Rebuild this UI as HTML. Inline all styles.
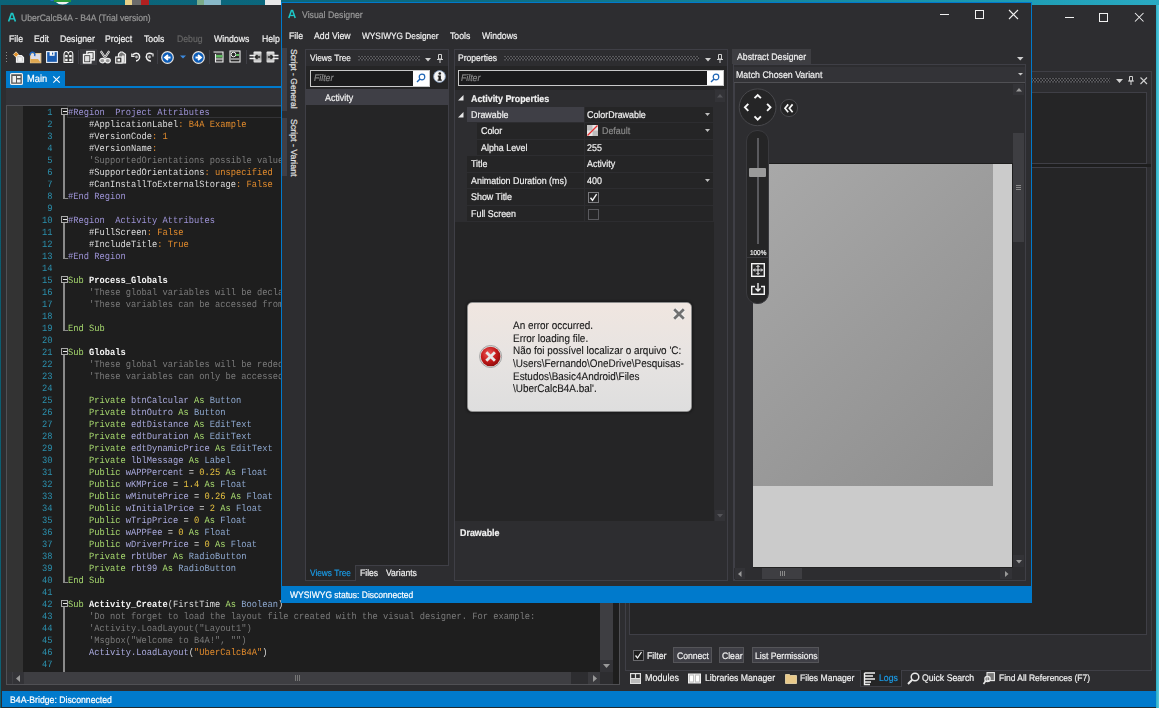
<!DOCTYPE html>
<html><head><meta charset="utf-8">
<style>
*{box-sizing:border-box;margin:0;padding:0}
html,body{width:1159px;height:708px;overflow:hidden;background:#2d2d30;font-family:"Liberation Sans",sans-serif;position:relative;text-rendering:geometricPrecision}
.a{position:absolute}
.t{position:absolute;white-space:pre;line-height:1;color:#f1f1f1;-webkit-text-stroke:0.2px currentColor}
svg{position:absolute;overflow:visible}
</style></head><body>
<div class="a" style="left:0px;top:0px;width:1159px;height:708px;background:linear-gradient(100deg,#0b5a6e 0%,#147a8c 40%,#1a90a8 70%,#22a5bd 100%);"></div><div class="a" style="left:0px;top:0px;width:1159px;height:5px;background:linear-gradient(90deg,#0b6378,#0c6a80 40%,#127f96 60%,#1b9ab2 85%,#2aaac2);"></div><svg style="left:46px;top:-6px" width="33" height="11"><circle cx="16.5" cy="0" r="10.5" fill="#f0f0f0"/><path d="M9 0H24V3H9Z" fill="#e87a2a"/><path d="M8 4H25V8H8Z" fill="#2a9a3a"/><path d="M6 -3V7" stroke="#2a70c8" stroke-width="3"/></svg><div class="a" style="left:125px;top:0px;width:7px;height:5px;background:#e8d088;"></div><div class="a" style="left:132px;top:0px;width:9px;height:5px;background:#6a6a6a;"></div><div class="a" style="left:141px;top:0px;width:8px;height:5px;background:#b02020;"></div><div class="a" style="left:197px;top:0px;width:7px;height:5px;background:#7aaa88;"></div><div class="a" style="left:204px;top:0px;width:17px;height:5px;background:#88b8c8;"></div><div class="a" style="left:265px;top:0px;width:16px;height:5px;background:#e8e8e8;"></div><div class="a" style="left:1156px;top:5px;width:3px;height:703px;background:linear-gradient(90deg,#2ab0c8,#58c8dc);"></div><div class="a" style="left:1px;top:5px;width:1155px;height:703px;background:#2d2d30;"></div><svg style="left:8px;top:13px" width="8" height="9" viewBox="0 0 8 9"><path d="M0.6 8.6 L3.4 0.6 L4.6 0.6 L7.4 8.6" stroke="#1ec8c8" stroke-width="1.6" fill="none"/><path d="M2 5.8 H6" stroke="#1ec8c8" stroke-width="1.4"/></svg><div class="t" style="left:21px;top:14.30px;font-size:9.46px;color:#999999;font-weight:normal;font-family:'Liberation Sans',sans-serif;transform:scaleX(0.9091);transform-origin:0 0;">UberCalcB4A - B4A (Trial version)</div><div class="a" style="left:1065px;top:17px;width:9px;height:1px;background:#f1f1f1;"></div><div class="a" style="left:1099px;top:13px;width:9px;height:9px;background:transparent;border:1px solid #f1f1f1"></div><svg style="left:1135px;top:13px" width="8.5" height="8.5"><path d="M0 0L8.5 8.5M8.5 0L0 8.5" stroke="#f1f1f1" stroke-width="1.05"/></svg><div class="t" style="left:8.6px;top:35.40px;font-size:9.57px;color:#f1f1f1;font-weight:normal;font-family:'Liberation Sans',sans-serif;transform:scaleX(0.9091);transform-origin:0 0;">File</div><div class="t" style="left:33.5px;top:35.40px;font-size:9.57px;color:#f1f1f1;font-weight:normal;font-family:'Liberation Sans',sans-serif;transform:scaleX(0.9091);transform-origin:0 0;">Edit</div><div class="t" style="left:59.5px;top:35.40px;font-size:9.57px;color:#f1f1f1;font-weight:normal;font-family:'Liberation Sans',sans-serif;transform:scaleX(0.9091);transform-origin:0 0;">Designer</div><div class="t" style="left:105.2px;top:35.40px;font-size:9.57px;color:#f1f1f1;font-weight:normal;font-family:'Liberation Sans',sans-serif;transform:scaleX(0.9091);transform-origin:0 0;">Project</div><div class="t" style="left:144px;top:35.40px;font-size:9.57px;color:#f1f1f1;font-weight:normal;font-family:'Liberation Sans',sans-serif;transform:scaleX(0.9091);transform-origin:0 0;">Tools</div><div class="t" style="left:176.5px;top:35.40px;font-size:9.57px;color:#656565;font-weight:normal;font-family:'Liberation Sans',sans-serif;transform:scaleX(0.9091);transform-origin:0 0;">Debug</div><div class="t" style="left:214px;top:35.40px;font-size:9.57px;color:#f1f1f1;font-weight:normal;font-family:'Liberation Sans',sans-serif;transform:scaleX(0.9091);transform-origin:0 0;">Windows</div><div class="t" style="left:262px;top:35.40px;font-size:9.57px;color:#f1f1f1;font-weight:normal;font-family:'Liberation Sans',sans-serif;transform:scaleX(0.9091);transform-origin:0 0;">Help</div><div class="a" style="left:6px;top:52px;width:1px;height:1px;background:#8a8a8a;"></div><div class="a" style="left:6px;top:55px;width:1px;height:1px;background:#8a8a8a;"></div><div class="a" style="left:6px;top:58px;width:1px;height:1px;background:#8a8a8a;"></div><div class="a" style="left:6px;top:61px;width:1px;height:1px;background:#8a8a8a;"></div><svg style="left:12px;top:50px" width="14" height="14" viewBox="0 0 14 14"><path d="M5 5.5H9.5L11.5 7.5V12.2H4.5V6" fill="#cfcfcf" stroke="#f4f4f4" stroke-width="1.2"/><rect x="6.2" y="7.3" width="3.6" height="4" fill="#f4f4f4"/><path d="M4 1.8 L6.6 4.5 L4 7.2 L1.4 4.5Z" fill="#e0902a" stroke="#f4e2c8" stroke-width="0.8"/></svg><svg style="left:29px;top:51px" width="13" height="13" viewBox="0 0 13 13"><path d="M1.5 2.5H11.8V11.8H1.5Z" fill="#dcdce8" stroke="#e8c890" stroke-width="1.1"/><path d="M1.5 8H9L11.8 11.8H1.5Z" fill="#e0a850"/><path d="M1.2 4.5A2.4 2.4 0 1 1 5.5 5" fill="none" stroke="#1f64c0" stroke-width="1.5"/></svg><svg style="left:45.5px;top:51px" width="12" height="12" viewBox="0 0 12 12"><rect x="0.6" y="0.6" width="10.8" height="10.8" fill="#1a5cb0" stroke="#eef2f8" stroke-width="1.1"/><rect x="3.6" y="1" width="5" height="3.8" fill="#f8f8f8"/><rect x="6" y="1.6" width="1.2" height="2" fill="#1a5cb0"/></svg><svg style="left:63px;top:50px" width="11" height="14" viewBox="0 0 11 14"><path d="M1 12.5V4 Q1.5 1.2 3.5 1.5 Q5 2 5.3 3.2 Q5.8 2 7.2 1.5 Q9.5 1.2 9.8 4V12.5Z" fill="#3a3a3a" stroke="#f4f4f4" stroke-width="1.1"/><rect x="2.2" y="5" width="2.4" height="2.2" fill="#f4f4f4"/><rect x="6.2" y="5" width="2.4" height="2.2" fill="#f4f4f4"/><rect x="2.2" y="8.8" width="2.4" height="2.4" fill="#f4f4f4"/><rect x="6.2" y="8.8" width="2.4" height="2.4" fill="#f4f4f4"/></svg><div class="a" style="left:78px;top:50px;width:1px;height:14px;background:#3f3f46;"></div><div class="a" style="left:80px;top:49px;width:17px;height:16px;background:#3a3a3e;"></div><svg style="left:82px;top:50px" width="14" height="14" viewBox="0 0 14 14"><rect x="4.8" y="1.5" width="7.5" height="8.5" fill="#e0e0e0" stroke="#f4f4f4" stroke-width="1.3"/><rect x="6" y="2.7" width="5.1" height="6.1" fill="none" stroke="#222" stroke-width="0.7"/><rect x="1.5" y="4.5" width="7.5" height="8.5" fill="#e8e8e8" stroke="#f4f4f4" stroke-width="1.3"/><rect x="2.7" y="5.7" width="5.1" height="6.1" fill="#e0e0e0" stroke="#222" stroke-width="0.7"/></svg><svg style="left:99px;top:50px" width="12" height="14" viewBox="0 0 12 14"><path d="M1.8 1.2 L6 7.5 L10.2 1.2" stroke="#f0f0f0" stroke-width="2.2" fill="none"/><path d="M1.8 1.2 L6 7.5 L10.2 1.2" stroke="#555" stroke-width="0.8" fill="none"/><ellipse cx="3.3" cy="10.6" rx="2.6" ry="2.2" fill="#999" stroke="#f0f0f0" stroke-width="1.2"/><ellipse cx="8.7" cy="10.6" rx="2.6" ry="2.2" fill="#999" stroke="#f0f0f0" stroke-width="1.2"/></svg><svg style="left:115px;top:51px" width="12" height="13" viewBox="0 0 12 13"><path d="M3.5 11.8V3 L5.5 1 H7.5 L10.5 3.3 V11.8Z" fill="#777" stroke="#f0f0f0" stroke-width="1.2"/><rect x="7" y="4.5" width="2.5" height="7" fill="#e0e0e0"/><rect x="0.7" y="6" width="6.3" height="6" fill="#333" stroke="#f0f0f0" stroke-width="1.2"/><rect x="2.5" y="7.8" width="2.6" height="2.6" fill="#f0f0f0"/></svg><svg style="left:131px;top:52px" width="10" height="10" viewBox="0 0 10 10"><path d="M1.5 3 Q4 0.5 7 1.6 Q9.3 3.5 8.3 6.5 Q7 9 5 9" stroke="#f0f0f0" stroke-width="1.4" fill="none"/><path d="M0.8 1.5V4.3H3.6" stroke="#f0f0f0" stroke-width="1.2" fill="none"/><circle cx="5.5" cy="5" r="1.4" fill="#bbb"/></svg><svg style="left:145px;top:52px" width="9" height="10" viewBox="0 0 9 10"><path d="M7.5 2 Q4.5 0.5 2 2 Q0.5 4.5 2 7 Q3.5 9.2 6 9" stroke="#f0f0f0" stroke-width="1.4" fill="none"/><path d="M8 1.5V4.5" stroke="#f0f0f0" stroke-width="1.2"/><circle cx="4.5" cy="5" r="1.4" fill="#bbb"/></svg><div class="a" style="left:157px;top:50px;width:1px;height:14px;background:#3f3f46;"></div><svg style="left:161px;top:51px" width="13" height="13" viewBox="0 0 13 13"><circle cx="6.5" cy="6.5" r="5.8" fill="#0b5cb8" stroke="#e8e4e0" stroke-width="1.2"/><path d="M9.5 6.5 H4.5 M7 4 L4 6.5 L7 9" stroke="#fff" stroke-width="1.8" fill="none"/></svg><svg style="left:180px;top:55px" width="6" height="4" viewBox="0 0 6 4"><path d="M0 0.5 H6 L3 3.5Z" fill="#3d8be0"/></svg><svg style="left:192px;top:51px" width="13" height="13" viewBox="0 0 13 13"><circle cx="6.5" cy="6.5" r="5.8" fill="#0b5cb8" stroke="#e8e4e0" stroke-width="1.2"/><path d="M3.5 6.5 H8.5 M6 4 L9 6.5 L6 9" stroke="#fff" stroke-width="1.8" fill="none"/></svg><div class="a" style="left:209px;top:50px;width:1px;height:14px;background:#3f3f46;"></div><svg style="left:213px;top:51px" width="12" height="12" viewBox="0 0 12 12"><path d="M0.5 1 H10 V11 H2.5 V3" fill="#444" stroke="#f0f0f0" stroke-width="1.1"/><rect x="3" y="4" width="6.5" height="2.5" fill="#5cb85c"/><path d="M3 8 H9.5" stroke="#f0f0f0" stroke-width="1"/></svg><svg style="left:229px;top:50px" width="12" height="13" viewBox="0 0 12 13"><rect x="1" y="1" width="10" height="11" fill="#2a2a2a" stroke="#f0f0f0" stroke-width="1.1"/><circle cx="4.5" cy="4.5" r="2.3" fill="none" stroke="#f0f0f0" stroke-width="1"/><rect x="7" y="4" width="3" height="2" fill="#5cb85c"/><path d="M2 9 H10" stroke="#f0f0f0" stroke-width="1"/></svg><div class="a" style="left:246px;top:50px;width:1px;height:14px;background:#3f3f46;"></div><svg style="left:249px;top:51px" width="14" height="12" viewBox="0 0 14 12"><defs><linearGradient id="sg" x1="0" y1="0" x2="0" y2="1"><stop offset="0" stop-color="#f4f4f4"/><stop offset="0.5" stop-color="#9a9a9a"/><stop offset="1" stop-color="#e8e8e8"/></linearGradient></defs><rect x="4.5" y="0.5" width="8" height="11" rx="1" fill="url(#sg)"/><path d="M0.5 4.5H6 M0.5 7.5H6" stroke="#f0f0f0" stroke-width="1.3"/><path d="M11 6H6.5 M8.5 4L6.5 6L8.5 8" stroke="#2a2a2a" stroke-width="1.5" fill="none"/></svg><svg style="left:265px;top:51px" width="14" height="12" viewBox="0 0 14 12"><rect x="1.5" y="0.5" width="8" height="11" rx="1" fill="url(#sg)"/><path d="M8 4.5H13.5 M8 7.5H13.5" stroke="#f0f0f0" stroke-width="1.3"/><path d="M3 6H7.5 M5.5 4L7.5 6L5.5 8" stroke="#2a2a2a" stroke-width="1.5" fill="none"/></svg><div class="a" style="left:6px;top:71px;width:59px;height:15px;background:#007acc;"></div><div class="a" style="left:6px;top:86px;width:610px;height:2px;background:#007acc;"></div><svg style="left:10px;top:73px" width="13" height="12" viewBox="0 0 13 12"><rect x="0.6" y="0.6" width="11.8" height="10.8" rx="1" fill="#555" stroke="#eee" stroke-width="1.2"/><rect x="2.5" y="3" width="3.5" height="6.5" fill="#eee"/><rect x="7" y="3" width="3.5" height="2" fill="#eee"/><rect x="7" y="6.5" width="3.5" height="3" fill="#eee"/></svg><div class="t" style="left:26.5px;top:75.40px;font-size:10.23px;color:#ffffff;font-weight:normal;font-family:'Liberation Sans',sans-serif;transform:scaleX(0.9091);transform-origin:0 0;">Main</div><svg style="left:53px;top:76px" width="7" height="7" viewBox="0 0 7 7"><path d="M0.3 0.3L6.7 6.7M6.7 0.3L0.3 6.7" stroke="#fff" stroke-width="1.1"/></svg><div class="a" style="left:6px;top:88px;width:614px;height:17px;background:#333337;"></div><div class="a" style="left:6px;top:105px;width:614px;height:580px;background:#1e1e1e;border:1px solid #505054"></div><div class="a" style="left:7px;top:106px;width:16px;height:566px;background:#333333;"></div><div class="a" style="left:67px;top:106px;width:214px;height:12px;background:transparent;border:1px solid #333336;border-right:none"></div><div class="a" style="left:23px;top:106px;width:577px;height:566px;overflow:hidden"><div class="t" style="left:0;width:29.5px;text-align:right;top:2.14px;font-family:'Liberation Mono';font-size:9.600px;color:#2b91af;-webkit-text-stroke:0;transform:scaleX(0.9118);transform-origin:100% 0">1</div><div class="t" style="left:45px;top:2.14px;font-family:'Liberation Mono';font-size:9.600px;-webkit-text-stroke:0;transform:scaleX(0.9118);transform-origin:0 0"><span style="color:#9d93d6">#Region  Project Attributes</span></div><div class="t" style="left:0;width:29.5px;text-align:right;top:14.14px;font-family:'Liberation Mono';font-size:9.600px;color:#2b91af;-webkit-text-stroke:0;transform:scaleX(0.9118);transform-origin:100% 0">2</div><div class="t" style="left:45px;top:14.14px;font-family:'Liberation Mono';font-size:9.600px;-webkit-text-stroke:0;transform:scaleX(0.9118);transform-origin:0 0"><span style="color:#dcdcdc">    #ApplicationLabel</span><span style="color:#e08a2c">: B4A Example</span></div><div class="t" style="left:0;width:29.5px;text-align:right;top:26.14px;font-family:'Liberation Mono';font-size:9.600px;color:#2b91af;-webkit-text-stroke:0;transform:scaleX(0.9118);transform-origin:100% 0">3</div><div class="t" style="left:45px;top:26.14px;font-family:'Liberation Mono';font-size:9.600px;-webkit-text-stroke:0;transform:scaleX(0.9118);transform-origin:0 0"><span style="color:#dcdcdc">    #VersionCode</span><span style="color:#e08a2c">: 1</span></div><div class="t" style="left:0;width:29.5px;text-align:right;top:38.14px;font-family:'Liberation Mono';font-size:9.600px;color:#2b91af;-webkit-text-stroke:0;transform:scaleX(0.9118);transform-origin:100% 0">4</div><div class="t" style="left:45px;top:38.14px;font-family:'Liberation Mono';font-size:9.600px;-webkit-text-stroke:0;transform:scaleX(0.9118);transform-origin:0 0"><span style="color:#dcdcdc">    #VersionName</span><span style="color:#e08a2c">:</span></div><div class="t" style="left:0;width:29.5px;text-align:right;top:50.14px;font-family:'Liberation Mono';font-size:9.600px;color:#2b91af;-webkit-text-stroke:0;transform:scaleX(0.9118);transform-origin:100% 0">5</div><div class="t" style="left:45px;top:50.14px;font-family:'Liberation Mono';font-size:9.600px;-webkit-text-stroke:0;transform:scaleX(0.9118);transform-origin:0 0"><span style="color:#7a7a7a">    &#x27;SupportedOrientations possible values: unspecified, landscape or portrait.</span></div><div class="t" style="left:0;width:29.5px;text-align:right;top:62.14px;font-family:'Liberation Mono';font-size:9.600px;color:#2b91af;-webkit-text-stroke:0;transform:scaleX(0.9118);transform-origin:100% 0">6</div><div class="t" style="left:45px;top:62.14px;font-family:'Liberation Mono';font-size:9.600px;-webkit-text-stroke:0;transform:scaleX(0.9118);transform-origin:0 0"><span style="color:#dcdcdc">    #SupportedOrientations</span><span style="color:#e08a2c">: unspecified</span></div><div class="t" style="left:0;width:29.5px;text-align:right;top:74.14px;font-family:'Liberation Mono';font-size:9.600px;color:#2b91af;-webkit-text-stroke:0;transform:scaleX(0.9118);transform-origin:100% 0">7</div><div class="t" style="left:45px;top:74.14px;font-family:'Liberation Mono';font-size:9.600px;-webkit-text-stroke:0;transform:scaleX(0.9118);transform-origin:0 0"><span style="color:#dcdcdc">    #CanInstallToExternalStorage</span><span style="color:#e08a2c">: False</span></div><div class="t" style="left:0;width:29.5px;text-align:right;top:86.14px;font-family:'Liberation Mono';font-size:9.600px;color:#2b91af;-webkit-text-stroke:0;transform:scaleX(0.9118);transform-origin:100% 0">8</div><div class="t" style="left:45px;top:86.14px;font-family:'Liberation Mono';font-size:9.600px;-webkit-text-stroke:0;transform:scaleX(0.9118);transform-origin:0 0"><span style="color:#9d93d6">#End Region</span></div><div class="t" style="left:0;width:29.5px;text-align:right;top:98.14px;font-family:'Liberation Mono';font-size:9.600px;color:#2b91af;-webkit-text-stroke:0;transform:scaleX(0.9118);transform-origin:100% 0">9</div><div class="t" style="left:0;width:29.5px;text-align:right;top:110.14px;font-family:'Liberation Mono';font-size:9.600px;color:#2b91af;-webkit-text-stroke:0;transform:scaleX(0.9118);transform-origin:100% 0">10</div><div class="t" style="left:45px;top:110.14px;font-family:'Liberation Mono';font-size:9.600px;-webkit-text-stroke:0;transform:scaleX(0.9118);transform-origin:0 0"><span style="color:#9d93d6">#Region  Activity Attributes</span></div><div class="t" style="left:0;width:29.5px;text-align:right;top:122.14px;font-family:'Liberation Mono';font-size:9.600px;color:#2b91af;-webkit-text-stroke:0;transform:scaleX(0.9118);transform-origin:100% 0">11</div><div class="t" style="left:45px;top:122.14px;font-family:'Liberation Mono';font-size:9.600px;-webkit-text-stroke:0;transform:scaleX(0.9118);transform-origin:0 0"><span style="color:#dcdcdc">    #FullScreen</span><span style="color:#e08a2c">: False</span></div><div class="t" style="left:0;width:29.5px;text-align:right;top:134.14px;font-family:'Liberation Mono';font-size:9.600px;color:#2b91af;-webkit-text-stroke:0;transform:scaleX(0.9118);transform-origin:100% 0">12</div><div class="t" style="left:45px;top:134.14px;font-family:'Liberation Mono';font-size:9.600px;-webkit-text-stroke:0;transform:scaleX(0.9118);transform-origin:0 0"><span style="color:#dcdcdc">    #IncludeTitle</span><span style="color:#e08a2c">: True</span></div><div class="t" style="left:0;width:29.5px;text-align:right;top:146.14px;font-family:'Liberation Mono';font-size:9.600px;color:#2b91af;-webkit-text-stroke:0;transform:scaleX(0.9118);transform-origin:100% 0">13</div><div class="t" style="left:45px;top:146.14px;font-family:'Liberation Mono';font-size:9.600px;-webkit-text-stroke:0;transform:scaleX(0.9118);transform-origin:0 0"><span style="color:#9d93d6">#End Region</span></div><div class="t" style="left:0;width:29.5px;text-align:right;top:158.14px;font-family:'Liberation Mono';font-size:9.600px;color:#2b91af;-webkit-text-stroke:0;transform:scaleX(0.9118);transform-origin:100% 0">14</div><div class="t" style="left:0;width:29.5px;text-align:right;top:170.14px;font-family:'Liberation Mono';font-size:9.600px;color:#2b91af;-webkit-text-stroke:0;transform:scaleX(0.9118);transform-origin:100% 0">15</div><div class="t" style="left:45px;top:170.14px;font-family:'Liberation Mono';font-size:9.600px;-webkit-text-stroke:0;transform:scaleX(0.9118);transform-origin:0 0"><span style="color:#a6d86e">Sub</span><span style="color:#f4f4f4;font-weight:bold"> Process_Globals</span></div><div class="t" style="left:0;width:29.5px;text-align:right;top:182.14px;font-family:'Liberation Mono';font-size:9.600px;color:#2b91af;-webkit-text-stroke:0;transform:scaleX(0.9118);transform-origin:100% 0">16</div><div class="t" style="left:45px;top:182.14px;font-family:'Liberation Mono';font-size:9.600px;-webkit-text-stroke:0;transform:scaleX(0.9118);transform-origin:0 0"><span style="color:#7a7a7a">    &#x27;These global variables will be declared once when the application starts.</span></div><div class="t" style="left:0;width:29.5px;text-align:right;top:194.14px;font-family:'Liberation Mono';font-size:9.600px;color:#2b91af;-webkit-text-stroke:0;transform:scaleX(0.9118);transform-origin:100% 0">17</div><div class="t" style="left:45px;top:194.14px;font-family:'Liberation Mono';font-size:9.600px;-webkit-text-stroke:0;transform:scaleX(0.9118);transform-origin:0 0"><span style="color:#7a7a7a">    &#x27;These variables can be accessed from all modules.</span></div><div class="t" style="left:0;width:29.5px;text-align:right;top:206.14px;font-family:'Liberation Mono';font-size:9.600px;color:#2b91af;-webkit-text-stroke:0;transform:scaleX(0.9118);transform-origin:100% 0">18</div><div class="t" style="left:0;width:29.5px;text-align:right;top:218.14px;font-family:'Liberation Mono';font-size:9.600px;color:#2b91af;-webkit-text-stroke:0;transform:scaleX(0.9118);transform-origin:100% 0">19</div><div class="t" style="left:45px;top:218.14px;font-family:'Liberation Mono';font-size:9.600px;-webkit-text-stroke:0;transform:scaleX(0.9118);transform-origin:0 0"><span style="color:#a6d86e">End Sub</span></div><div class="t" style="left:0;width:29.5px;text-align:right;top:230.14px;font-family:'Liberation Mono';font-size:9.600px;color:#2b91af;-webkit-text-stroke:0;transform:scaleX(0.9118);transform-origin:100% 0">20</div><div class="t" style="left:0;width:29.5px;text-align:right;top:242.14px;font-family:'Liberation Mono';font-size:9.600px;color:#2b91af;-webkit-text-stroke:0;transform:scaleX(0.9118);transform-origin:100% 0">21</div><div class="t" style="left:45px;top:242.14px;font-family:'Liberation Mono';font-size:9.600px;-webkit-text-stroke:0;transform:scaleX(0.9118);transform-origin:0 0"><span style="color:#a6d86e">Sub</span><span style="color:#f4f4f4;font-weight:bold"> Globals</span></div><div class="t" style="left:0;width:29.5px;text-align:right;top:254.14px;font-family:'Liberation Mono';font-size:9.600px;color:#2b91af;-webkit-text-stroke:0;transform:scaleX(0.9118);transform-origin:100% 0">22</div><div class="t" style="left:45px;top:254.14px;font-family:'Liberation Mono';font-size:9.600px;-webkit-text-stroke:0;transform:scaleX(0.9118);transform-origin:0 0"><span style="color:#7a7a7a">    &#x27;These global variables will be redeclared each time the activity is created.</span></div><div class="t" style="left:0;width:29.5px;text-align:right;top:266.14px;font-family:'Liberation Mono';font-size:9.600px;color:#2b91af;-webkit-text-stroke:0;transform:scaleX(0.9118);transform-origin:100% 0">23</div><div class="t" style="left:45px;top:266.14px;font-family:'Liberation Mono';font-size:9.600px;-webkit-text-stroke:0;transform:scaleX(0.9118);transform-origin:0 0"><span style="color:#7a7a7a">    &#x27;These variables can only be accessed from this module.</span></div><div class="t" style="left:0;width:29.5px;text-align:right;top:278.14px;font-family:'Liberation Mono';font-size:9.600px;color:#2b91af;-webkit-text-stroke:0;transform:scaleX(0.9118);transform-origin:100% 0">24</div><div class="t" style="left:0;width:29.5px;text-align:right;top:290.14px;font-family:'Liberation Mono';font-size:9.600px;color:#2b91af;-webkit-text-stroke:0;transform:scaleX(0.9118);transform-origin:100% 0">25</div><div class="t" style="left:45px;top:290.14px;font-family:'Liberation Mono';font-size:9.600px;-webkit-text-stroke:0;transform:scaleX(0.9118);transform-origin:0 0"><span style="color:#a6d86e">    Private</span><span style="color:#a9a9dc"> btnCalcular</span><span style="color:#a6d86e"> As </span><span style="color:#8ea8cf">Button</span></div><div class="t" style="left:0;width:29.5px;text-align:right;top:302.14px;font-family:'Liberation Mono';font-size:9.600px;color:#2b91af;-webkit-text-stroke:0;transform:scaleX(0.9118);transform-origin:100% 0">26</div><div class="t" style="left:45px;top:302.14px;font-family:'Liberation Mono';font-size:9.600px;-webkit-text-stroke:0;transform:scaleX(0.9118);transform-origin:0 0"><span style="color:#a6d86e">    Private</span><span style="color:#a9a9dc"> btnOutro</span><span style="color:#a6d86e"> As </span><span style="color:#8ea8cf">Button</span></div><div class="t" style="left:0;width:29.5px;text-align:right;top:314.14px;font-family:'Liberation Mono';font-size:9.600px;color:#2b91af;-webkit-text-stroke:0;transform:scaleX(0.9118);transform-origin:100% 0">27</div><div class="t" style="left:45px;top:314.14px;font-family:'Liberation Mono';font-size:9.600px;-webkit-text-stroke:0;transform:scaleX(0.9118);transform-origin:0 0"><span style="color:#a6d86e">    Private</span><span style="color:#a9a9dc"> edtDistance</span><span style="color:#a6d86e"> As </span><span style="color:#8ea8cf">EditText</span></div><div class="t" style="left:0;width:29.5px;text-align:right;top:326.14px;font-family:'Liberation Mono';font-size:9.600px;color:#2b91af;-webkit-text-stroke:0;transform:scaleX(0.9118);transform-origin:100% 0">28</div><div class="t" style="left:45px;top:326.14px;font-family:'Liberation Mono';font-size:9.600px;-webkit-text-stroke:0;transform:scaleX(0.9118);transform-origin:0 0"><span style="color:#a6d86e">    Private</span><span style="color:#a9a9dc"> edtDuration</span><span style="color:#a6d86e"> As </span><span style="color:#8ea8cf">EditText</span></div><div class="t" style="left:0;width:29.5px;text-align:right;top:338.14px;font-family:'Liberation Mono';font-size:9.600px;color:#2b91af;-webkit-text-stroke:0;transform:scaleX(0.9118);transform-origin:100% 0">29</div><div class="t" style="left:45px;top:338.14px;font-family:'Liberation Mono';font-size:9.600px;-webkit-text-stroke:0;transform:scaleX(0.9118);transform-origin:0 0"><span style="color:#a6d86e">    Private</span><span style="color:#a9a9dc"> edtDynamicPrice</span><span style="color:#a6d86e"> As </span><span style="color:#8ea8cf">EditText</span></div><div class="t" style="left:0;width:29.5px;text-align:right;top:350.14px;font-family:'Liberation Mono';font-size:9.600px;color:#2b91af;-webkit-text-stroke:0;transform:scaleX(0.9118);transform-origin:100% 0">30</div><div class="t" style="left:45px;top:350.14px;font-family:'Liberation Mono';font-size:9.600px;-webkit-text-stroke:0;transform:scaleX(0.9118);transform-origin:0 0"><span style="color:#a6d86e">    Private</span><span style="color:#a9a9dc"> lblMessage</span><span style="color:#a6d86e"> As </span><span style="color:#8ea8cf">Label</span></div><div class="t" style="left:0;width:29.5px;text-align:right;top:362.14px;font-family:'Liberation Mono';font-size:9.600px;color:#2b91af;-webkit-text-stroke:0;transform:scaleX(0.9118);transform-origin:100% 0">31</div><div class="t" style="left:45px;top:362.14px;font-family:'Liberation Mono';font-size:9.600px;-webkit-text-stroke:0;transform:scaleX(0.9118);transform-origin:0 0"><span style="color:#a6d86e">    Public</span><span style="color:#a9a9dc"> wAPPPercent</span><span style="color:#dcdcdc"> = </span><span style="color:#e8c341">0.25</span><span style="color:#a6d86e"> As </span><span style="color:#8ea8cf">Float</span></div><div class="t" style="left:0;width:29.5px;text-align:right;top:374.14px;font-family:'Liberation Mono';font-size:9.600px;color:#2b91af;-webkit-text-stroke:0;transform:scaleX(0.9118);transform-origin:100% 0">32</div><div class="t" style="left:45px;top:374.14px;font-family:'Liberation Mono';font-size:9.600px;-webkit-text-stroke:0;transform:scaleX(0.9118);transform-origin:0 0"><span style="color:#a6d86e">    Public</span><span style="color:#a9a9dc"> wKMPrice</span><span style="color:#dcdcdc"> = </span><span style="color:#e8c341">1.4</span><span style="color:#a6d86e"> As </span><span style="color:#8ea8cf">Float</span></div><div class="t" style="left:0;width:29.5px;text-align:right;top:386.14px;font-family:'Liberation Mono';font-size:9.600px;color:#2b91af;-webkit-text-stroke:0;transform:scaleX(0.9118);transform-origin:100% 0">33</div><div class="t" style="left:45px;top:386.14px;font-family:'Liberation Mono';font-size:9.600px;-webkit-text-stroke:0;transform:scaleX(0.9118);transform-origin:0 0"><span style="color:#a6d86e">    Public</span><span style="color:#a9a9dc"> wMinutePrice</span><span style="color:#dcdcdc"> = </span><span style="color:#e8c341">0.26</span><span style="color:#a6d86e"> As </span><span style="color:#8ea8cf">Float</span></div><div class="t" style="left:0;width:29.5px;text-align:right;top:398.14px;font-family:'Liberation Mono';font-size:9.600px;color:#2b91af;-webkit-text-stroke:0;transform:scaleX(0.9118);transform-origin:100% 0">34</div><div class="t" style="left:45px;top:398.14px;font-family:'Liberation Mono';font-size:9.600px;-webkit-text-stroke:0;transform:scaleX(0.9118);transform-origin:0 0"><span style="color:#a6d86e">    Public</span><span style="color:#a9a9dc"> wInitialPrice</span><span style="color:#dcdcdc"> = </span><span style="color:#e8c341">2</span><span style="color:#a6d86e"> As </span><span style="color:#8ea8cf">Float</span></div><div class="t" style="left:0;width:29.5px;text-align:right;top:410.14px;font-family:'Liberation Mono';font-size:9.600px;color:#2b91af;-webkit-text-stroke:0;transform:scaleX(0.9118);transform-origin:100% 0">35</div><div class="t" style="left:45px;top:410.14px;font-family:'Liberation Mono';font-size:9.600px;-webkit-text-stroke:0;transform:scaleX(0.9118);transform-origin:0 0"><span style="color:#a6d86e">    Public</span><span style="color:#a9a9dc"> wTripPrice</span><span style="color:#dcdcdc"> = </span><span style="color:#e8c341">0</span><span style="color:#a6d86e"> As </span><span style="color:#8ea8cf">Float</span></div><div class="t" style="left:0;width:29.5px;text-align:right;top:422.14px;font-family:'Liberation Mono';font-size:9.600px;color:#2b91af;-webkit-text-stroke:0;transform:scaleX(0.9118);transform-origin:100% 0">36</div><div class="t" style="left:45px;top:422.14px;font-family:'Liberation Mono';font-size:9.600px;-webkit-text-stroke:0;transform:scaleX(0.9118);transform-origin:0 0"><span style="color:#a6d86e">    Public</span><span style="color:#a9a9dc"> wAPPFee</span><span style="color:#dcdcdc"> = </span><span style="color:#e8c341">0</span><span style="color:#a6d86e"> As </span><span style="color:#8ea8cf">Float</span></div><div class="t" style="left:0;width:29.5px;text-align:right;top:434.14px;font-family:'Liberation Mono';font-size:9.600px;color:#2b91af;-webkit-text-stroke:0;transform:scaleX(0.9118);transform-origin:100% 0">37</div><div class="t" style="left:45px;top:434.14px;font-family:'Liberation Mono';font-size:9.600px;-webkit-text-stroke:0;transform:scaleX(0.9118);transform-origin:0 0"><span style="color:#a6d86e">    Public</span><span style="color:#a9a9dc"> wDriverPrice</span><span style="color:#dcdcdc"> = </span><span style="color:#e8c341">0</span><span style="color:#a6d86e"> As </span><span style="color:#8ea8cf">Float</span></div><div class="t" style="left:0;width:29.5px;text-align:right;top:446.14px;font-family:'Liberation Mono';font-size:9.600px;color:#2b91af;-webkit-text-stroke:0;transform:scaleX(0.9118);transform-origin:100% 0">38</div><div class="t" style="left:45px;top:446.14px;font-family:'Liberation Mono';font-size:9.600px;-webkit-text-stroke:0;transform:scaleX(0.9118);transform-origin:0 0"><span style="color:#a6d86e">    Private</span><span style="color:#a9a9dc"> rbtUber</span><span style="color:#a6d86e"> As </span><span style="color:#8ea8cf">RadioButton</span></div><div class="t" style="left:0;width:29.5px;text-align:right;top:458.14px;font-family:'Liberation Mono';font-size:9.600px;color:#2b91af;-webkit-text-stroke:0;transform:scaleX(0.9118);transform-origin:100% 0">39</div><div class="t" style="left:45px;top:458.14px;font-family:'Liberation Mono';font-size:9.600px;-webkit-text-stroke:0;transform:scaleX(0.9118);transform-origin:0 0"><span style="color:#a6d86e">    Private</span><span style="color:#a9a9dc"> rbt99</span><span style="color:#a6d86e"> As </span><span style="color:#8ea8cf">RadioButton</span></div><div class="t" style="left:0;width:29.5px;text-align:right;top:470.14px;font-family:'Liberation Mono';font-size:9.600px;color:#2b91af;-webkit-text-stroke:0;transform:scaleX(0.9118);transform-origin:100% 0">40</div><div class="t" style="left:45px;top:470.14px;font-family:'Liberation Mono';font-size:9.600px;-webkit-text-stroke:0;transform:scaleX(0.9118);transform-origin:0 0"><span style="color:#a6d86e">End Sub</span></div><div class="t" style="left:0;width:29.5px;text-align:right;top:482.14px;font-family:'Liberation Mono';font-size:9.600px;color:#2b91af;-webkit-text-stroke:0;transform:scaleX(0.9118);transform-origin:100% 0">41</div><div class="t" style="left:0;width:29.5px;text-align:right;top:494.14px;font-family:'Liberation Mono';font-size:9.600px;color:#2b91af;-webkit-text-stroke:0;transform:scaleX(0.9118);transform-origin:100% 0">42</div><div class="t" style="left:45px;top:494.14px;font-family:'Liberation Mono';font-size:9.600px;-webkit-text-stroke:0;transform:scaleX(0.9118);transform-origin:0 0"><span style="color:#a6d86e">Sub</span><span style="color:#f4f4f4;font-weight:bold"> Activity_Create</span><span style="color:#dcdcdc">(FirstTime</span><span style="color:#a6d86e"> As </span><span style="color:#8ea8cf">Boolean</span><span style="color:#dcdcdc">)</span></div><div class="t" style="left:0;width:29.5px;text-align:right;top:506.14px;font-family:'Liberation Mono';font-size:9.600px;color:#2b91af;-webkit-text-stroke:0;transform:scaleX(0.9118);transform-origin:100% 0">43</div><div class="t" style="left:45px;top:506.14px;font-family:'Liberation Mono';font-size:9.600px;-webkit-text-stroke:0;transform:scaleX(0.9118);transform-origin:0 0"><span style="color:#7a7a7a">    &#x27;Do not forget to load the layout file created with the visual designer. For example:</span></div><div class="t" style="left:0;width:29.5px;text-align:right;top:518.14px;font-family:'Liberation Mono';font-size:9.600px;color:#2b91af;-webkit-text-stroke:0;transform:scaleX(0.9118);transform-origin:100% 0">44</div><div class="t" style="left:45px;top:518.14px;font-family:'Liberation Mono';font-size:9.600px;-webkit-text-stroke:0;transform:scaleX(0.9118);transform-origin:0 0"><span style="color:#7a7a7a">    &#x27;Activity.LoadLayout(&quot;Layout1&quot;)</span></div><div class="t" style="left:0;width:29.5px;text-align:right;top:530.14px;font-family:'Liberation Mono';font-size:9.600px;color:#2b91af;-webkit-text-stroke:0;transform:scaleX(0.9118);transform-origin:100% 0">45</div><div class="t" style="left:45px;top:530.14px;font-family:'Liberation Mono';font-size:9.600px;-webkit-text-stroke:0;transform:scaleX(0.9118);transform-origin:0 0"><span style="color:#7a7a7a">    &#x27;Msgbox(&quot;Welcome to B4A!&quot;, &quot;&quot;)</span></div><div class="t" style="left:0;width:29.5px;text-align:right;top:542.14px;font-family:'Liberation Mono';font-size:9.600px;color:#2b91af;-webkit-text-stroke:0;transform:scaleX(0.9118);transform-origin:100% 0">46</div><div class="t" style="left:45px;top:542.14px;font-family:'Liberation Mono';font-size:9.600px;-webkit-text-stroke:0;transform:scaleX(0.9118);transform-origin:0 0"><span style="color:#a9a9dc">    Activity.LoadLayout</span><span style="color:#dcdcdc">(</span><span style="color:#e08a2c">&quot;UberCalcB4A&quot;</span><span style="color:#dcdcdc">)</span></div><div class="t" style="left:0;width:29.5px;text-align:right;top:554.14px;font-family:'Liberation Mono';font-size:9.600px;color:#2b91af;-webkit-text-stroke:0;transform:scaleX(0.9118);transform-origin:100% 0">47</div></div><div class="a" style="left:61px;top:108px;width:7px;height:7px;background:#1e1e1e;border:1px solid #a8a8a8"></div><div class="a" style="left:62.5px;top:111px;width:4px;height:1px;background:#e8e8e8;"></div><div class="a" style="left:63.2px;top:115px;width:1.8px;height:83px;background:#8a8a8a;"></div><div class="a" style="left:63.2px;top:198px;width:4.8px;height:1px;background:#8a8a8a;"></div><div class="a" style="left:61px;top:216px;width:7px;height:7px;background:#1e1e1e;border:1px solid #a8a8a8"></div><div class="a" style="left:62.5px;top:219px;width:4px;height:1px;background:#e8e8e8;"></div><div class="a" style="left:63.2px;top:223px;width:1.8px;height:35px;background:#8a8a8a;"></div><div class="a" style="left:63.2px;top:258px;width:4.8px;height:1px;background:#8a8a8a;"></div><div class="a" style="left:61px;top:276px;width:7px;height:7px;background:#1e1e1e;border:1px solid #a8a8a8"></div><div class="a" style="left:62.5px;top:279px;width:4px;height:1px;background:#e8e8e8;"></div><div class="a" style="left:63.2px;top:283px;width:1.8px;height:47px;background:#8a8a8a;"></div><div class="a" style="left:63.2px;top:330px;width:4.8px;height:1px;background:#8a8a8a;"></div><div class="a" style="left:61px;top:348px;width:7px;height:7px;background:#1e1e1e;border:1px solid #a8a8a8"></div><div class="a" style="left:62.5px;top:351px;width:4px;height:1px;background:#e8e8e8;"></div><div class="a" style="left:63.2px;top:355px;width:1.8px;height:227px;background:#8a8a8a;"></div><div class="a" style="left:63.2px;top:582px;width:4.8px;height:1px;background:#8a8a8a;"></div><div class="a" style="left:61px;top:600px;width:7px;height:7px;background:#1e1e1e;border:1px solid #a8a8a8"></div><div class="a" style="left:62.5px;top:603px;width:4px;height:1px;background:#e8e8e8;"></div><div class="a" style="left:63.2px;top:607px;width:1.8px;height:65px;background:#8a8a8a;"></div><div class="a" style="left:600px;top:106px;width:13px;height:566px;background:#3e3e42;"></div><div class="a" style="left:600px;top:660px;width:13px;height:12px;background:#333337;"></div><svg style="left:603px;top:664px" width="7" height="4"><path d="M0 0H7L3.5 4Z" fill="#999"/></svg><div class="a" style="left:613px;top:106px;width:6px;height:566px;background:#1e1e1e;"></div><div class="a" style="left:7px;top:672px;width:612px;height:12px;background:#3e3e42;"></div><div class="a" style="left:571px;top:672px;width:17px;height:12px;background:#2d2d30;"></div><div class="a" style="left:7px;top:672px;width:5px;height:12px;background:#333337;"></div><div class="a" style="left:13px;top:672px;width:11px;height:12px;background:#333337;"></div><svg style="left:16px;top:675px" width="4" height="7"><path d="M4 0V7L0 3.5Z" fill="#999"/></svg><div class="a" style="left:588px;top:672px;width:12px;height:12px;background:#3a3a3e;"></div><svg style="left:593px;top:675px" width="4" height="7"><path d="M0 0V7L4 3.5Z" fill="#999"/></svg><div class="a" style="left:600px;top:672px;width:13px;height:12px;background:#2d2d30;"></div><div class="a" style="left:295px;top:675px;width:1px;height:6px;background:#777;"></div><div class="a" style="left:297px;top:675px;width:1px;height:6px;background:#777;"></div><div class="a" style="left:299px;top:675px;width:1px;height:6px;background:#777;"></div><div class="a" style="left:613px;top:672px;width:6px;height:12px;background:#1e1e1e;"></div><div class="a" style="left:2px;top:691px;width:1154px;height:16px;background:#007acc;"></div><div class="t" style="left:9.7px;top:696.30px;font-size:9.57px;color:#ffffff;font-weight:normal;font-family:'Liberation Sans',sans-serif;transform:scaleX(0.9091);transform-origin:0 0;">B4A-Bridge: Disconnected</div><div class="a" style="left:1px;top:707px;width:1155px;height:1px;background:#1e2a30;"></div><div class="a" style="left:625px;top:71px;width:527px;height:600px;background:#2d2d30;border:1px solid #3f3f46"></div><div class="a" style="left:629px;top:92px;width:518px;height:72px;background:#252526;border:1px solid #3f3f46"></div><div class="a" style="left:626px;top:164px;width:525px;height:3px;background:#1e1e1e;"></div><div class="a" style="left:629px;top:167px;width:518px;height:468px;background:#252526;border:1px solid #3f3f46"></div><svg style="left:1116px;top:79px" width="7" height="4"><path d="M0 0H7L3.5 4Z" fill="#d0d0d0"/></svg><svg style="left:1128px;top:76px" width="6" height="9" viewBox="0 0 6 9"><path d="M1.5 0.5H4.5V5H1.5Z M0 5H6 M3 5V9" stroke="#d0d0d0" stroke-width="1" fill="none"/></svg><svg style="left:1139.5px;top:76.5px" width="7.5" height="7.5"><path d="M0.5 0.5L7 7M7 0.5L0.5 7" stroke="#d0d0d0" stroke-width="1.1"/></svg><div class="a" style="left:633px;top:650px;width:11px;height:11px;background:#1e1e1e;border:1px solid #6a6a6e"></div><svg style="left:634px;top:651px" width="9" height="9" viewBox="0 0 9 9"><path d="M1.5 4.5L3.5 7L7.5 1" stroke="#f0f0f0" stroke-width="1.3" fill="none"/></svg><div class="t" style="left:646.5px;top:652.20px;font-size:9.68px;color:#f1f1f1;font-weight:normal;font-family:'Liberation Sans',sans-serif;transform:scaleX(0.9091);transform-origin:0 0;">Filter</div><div class="a" style="left:673px;top:647px;width:39px;height:16px;background:#3f3f46;border:1px solid #555559"></div><div class="a" style="left:719px;top:647px;width:25px;height:16px;background:#3f3f46;border:1px solid #555559"></div><div class="a" style="left:752px;top:647px;width:67px;height:16px;background:#3f3f46;border:1px solid #555559"></div><div class="t" style="left:677px;top:652.20px;font-size:9.46px;color:#f1f1f1;font-weight:normal;font-family:'Liberation Sans',sans-serif;transform:scaleX(0.9091);transform-origin:0 0;">Connect</div><div class="t" style="left:722px;top:652.20px;font-size:9.46px;color:#f1f1f1;font-weight:normal;font-family:'Liberation Sans',sans-serif;transform:scaleX(0.9091);transform-origin:0 0;">Clear</div><div class="t" style="left:754.5px;top:652.20px;font-size:9.46px;color:#f1f1f1;font-weight:normal;font-family:'Liberation Sans',sans-serif;transform:scaleX(0.9091);transform-origin:0 0;">List Permissions</div><div class="a" style="left:860px;top:670px;width:42px;height:17px;background:#252526;border:1px solid #3f3f46;border-top:none"></div><svg style="left:630px;top:673px" width="11" height="11" viewBox="0 0 11 11"><rect x="0.6" y="0.6" width="9.8" height="9.8" fill="none" stroke="#e0e0e0" stroke-width="1.2"/><path d="M5.5 0.6V5.5M0.6 5.5H10.4" stroke="#e0e0e0" stroke-width="1.2"/><rect x="1" y="6" width="9" height="4" fill="#bbb"/></svg><div class="t" style="left:645.3px;top:674.30px;font-size:9.90px;color:#f1f1f1;font-weight:normal;font-family:'Liberation Sans',sans-serif;transform:scaleX(0.9091);transform-origin:0 0;">Modules</div><svg style="left:688px;top:673px" width="13" height="11" viewBox="0 0 13 11"><path d="M0.6 1H6.5V10H0.6Z M6.5 1H12.4V10H6.5Z" fill="#bbb" stroke="#f0f0f0" stroke-width="1.2"/><rect x="2" y="2.5" width="3" height="6" fill="#fff"/><rect x="8" y="2.5" width="3" height="6" fill="#fff"/></svg><div class="t" style="left:704.8px;top:674.30px;font-size:9.57px;color:#f1f1f1;font-weight:normal;font-family:'Liberation Sans',sans-serif;transform:scaleX(0.9091);transform-origin:0 0;">Libraries Manager</div><svg style="left:785px;top:673px" width="12" height="11" viewBox="0 0 12 11"><path d="M0.5 1.5H4.5L5.5 2.5H11.5V10.5H0.5Z" fill="#e8c98a" stroke="#f0ddb0" stroke-width="0.8"/></svg><div class="t" style="left:799.5px;top:674.30px;font-size:9.46px;color:#f1f1f1;font-weight:normal;font-family:'Liberation Sans',sans-serif;transform:scaleX(0.9091);transform-origin:0 0;">Files Manager</div><svg style="left:864px;top:672px" width="12" height="13" viewBox="0 0 12 13"><path d="M0.5 1H11 M0.5 4H9 M0.5 7H11 M0.5 10H7 M0.5 1V12.5H6" stroke="#f0f0f0" stroke-width="1.4" fill="none"/></svg><div class="t" style="left:878.8px;top:674.30px;font-size:9.57px;color:#1a9be6;font-weight:normal;font-family:'Liberation Sans',sans-serif;transform:scaleX(0.9091);transform-origin:0 0;">Logs</div><svg style="left:907px;top:672px" width="13" height="13" viewBox="0 0 13 13"><circle cx="8" cy="5" r="3.8" fill="none" stroke="#e8e8e8" stroke-width="1.5"/><path d="M5.2 7.8L1 12" stroke="#e8e8e8" stroke-width="2"/></svg><div class="t" style="left:922.2px;top:674.30px;font-size:9.57px;color:#f1f1f1;font-weight:normal;font-family:'Liberation Sans',sans-serif;transform:scaleX(0.9091);transform-origin:0 0;">Quick Search</div><svg style="left:983px;top:672px" width="12" height="13" viewBox="0 0 12 13"><rect x="4" y="0.6" width="7.4" height="8" fill="#777" stroke="#e8e8e8" stroke-width="1.1"/><circle cx="4.5" cy="7" r="2.6" fill="none" stroke="#e8e8e8" stroke-width="1.4"/><path d="M2.7 8.8L0.5 12" stroke="#e8e8e8" stroke-width="1.6"/></svg><div class="t" style="left:999.4px;top:674.30px;font-size:9.29px;color:#f1f1f1;font-weight:normal;font-family:'Liberation Sans',sans-serif;transform:scaleX(0.9091);transform-origin:0 0;">Find All References (F7)</div><svg style="left:1031px;top:78px" width="79" height="5"><defs><pattern id="gp1031" width="3" height="5" patternUnits="userSpaceOnUse"><rect x="0.4" y="0" width="1.3" height="1.2" fill="#747478"/><rect x="1.9" y="0" width="1.1" height="1.2" fill="#1c1c1e"/><rect x="0.4" y="1.6" width="1.2" height="1.4" fill="#1c1c1e"/><rect x="1.9" y="1.6" width="1.2" height="1.4" fill="#6a6a6e"/><rect x="0.4" y="3.2" width="1.3" height="1.3" fill="#747478"/><rect x="1.9" y="3.2" width="1.1" height="1.3" fill="#1c1c1e"/></pattern></defs><rect width="79" height="5" fill="url(#gp1031)"/></svg><div class="a" style="left:281px;top:2px;width:751px;height:601px;background:#2d2d30;border:1px solid #007acc"></div><svg style="left:288px;top:10px" width="8" height="8.5" viewBox="0 0 8 9"><path d="M0.6 8.6 L3.4 0.6 L4.6 0.6 L7.4 8.6" stroke="#1ec8c8" stroke-width="1.6" fill="none"/><path d="M2 5.8 H6" stroke="#1ec8c8" stroke-width="1.4"/></svg><div class="t" style="left:302px;top:11.30px;font-size:9.57px;color:#999999;font-weight:normal;font-family:'Liberation Sans',sans-serif;transform:scaleX(0.9091);transform-origin:0 0;">Visual Designer</div><div class="a" style="left:940px;top:14px;width:9px;height:1px;background:#f1f1f1;"></div><div class="a" style="left:975px;top:10px;width:9px;height:9px;background:transparent;border:1px solid #f1f1f1"></div><svg style="left:1009px;top:10px" width="9" height="9"><path d="M0 0L9 9M9 0L0 9" stroke="#f1f1f1" stroke-width="1.1"/></svg><div class="t" style="left:289px;top:32.20px;font-size:9.57px;color:#f1f1f1;font-weight:normal;font-family:'Liberation Sans',sans-serif;transform:scaleX(0.9091);transform-origin:0 0;">File</div><div class="t" style="left:313.5px;top:32.20px;font-size:9.57px;color:#f1f1f1;font-weight:normal;font-family:'Liberation Sans',sans-serif;transform:scaleX(0.9091);transform-origin:0 0;">Add View</div><div class="t" style="left:362px;top:32.20px;font-size:9.13px;color:#f1f1f1;font-weight:normal;font-family:'Liberation Sans',sans-serif;transform:scaleX(0.9091);transform-origin:0 0;">WYSIWYG Designer</div><div class="t" style="left:450px;top:32.20px;font-size:9.57px;color:#f1f1f1;font-weight:normal;font-family:'Liberation Sans',sans-serif;transform:scaleX(0.9091);transform-origin:0 0;">Tools</div><div class="t" style="left:482px;top:32.20px;font-size:9.57px;color:#f1f1f1;font-weight:normal;font-family:'Liberation Sans',sans-serif;transform:scaleX(0.9091);transform-origin:0 0;">Windows</div><div class="a" style="left:282px;top:48px;width:5px;height:63px;background:#3f3f46;"></div><div class="a" style="left:282px;top:118px;width:5px;height:58px;background:#3f3f46;"></div><div class="t" style="left:297.5px;top:49px;font-size:8.5px;color:#e0e0e0;transform-origin:0 0;transform:rotate(90deg)">Script - General</div><div class="t" style="left:297.5px;top:119px;font-size:8.8px;color:#e0e0e0;transform-origin:0 0;transform:rotate(90deg)">Script - Variant</div><div class="a" style="left:305px;top:49px;width:144px;height:517px;background:#2d2d30;border:1px solid #3f3f46"></div><div class="t" style="left:310px;top:54.20px;font-size:9.13px;color:#f1f1f1;font-weight:normal;font-family:'Liberation Sans',sans-serif;transform:scaleX(0.9091);transform-origin:0 0;">Views Tree</div><svg style="left:357.5px;top:56px" width="62" height="5"><defs><pattern id="gp357" width="3" height="5" patternUnits="userSpaceOnUse"><rect x="0.4" y="0" width="1.3" height="1.2" fill="#747478"/><rect x="1.9" y="0" width="1.1" height="1.2" fill="#1c1c1e"/><rect x="0.4" y="1.6" width="1.2" height="1.4" fill="#1c1c1e"/><rect x="1.9" y="1.6" width="1.2" height="1.4" fill="#6a6a6e"/><rect x="0.4" y="3.2" width="1.3" height="1.3" fill="#747478"/><rect x="1.9" y="3.2" width="1.1" height="1.3" fill="#1c1c1e"/></pattern></defs><rect width="62" height="5" fill="url(#gp357)"/></svg><svg style="left:425px;top:57.5px" width="6" height="3.5"><path d="M0 0H6L3.0 3.5Z" fill="#d0d0d0"/></svg><svg style="left:437px;top:54px" width="6" height="9" viewBox="0 0 6 9"><path d="M1.5 0.5H4.5V5H1.5Z" fill="none" stroke="#d0d0d0" stroke-width="1"/><path d="M0 5.5H6M3 5.5V9" stroke="#d0d0d0" stroke-width="1"/></svg><div class="a" style="left:306px;top:66px;width:142px;height:23px;background:#252526;"></div><div class="a" style="left:310px;top:70px;width:120px;height:17px;background:#1b1b1c;border:1px solid #c8c8c8"></div><div class="a" style="left:413px;top:71px;width:16px;height:15px;background:#ffffff;"></div><svg style="left:416px;top:73px" width="10" height="10" viewBox="0 0 10 10"><circle cx="6" cy="4" r="2.8" fill="none" stroke="#1e64b4" stroke-width="1.2"/><path d="M4 6L1 9" stroke="#1e64b4" stroke-width="1.5"/></svg><div class="t" style="left:313.6px;top:73.60px;font-size:9.57px;color:#8a8a8a;font-weight:normal;font-family:'Liberation Sans',sans-serif;transform:scaleX(0.9091);transform-origin:0 0;font-style:italic">Filter</div><svg style="left:433px;top:70px" width="13" height="13" viewBox="0 0 13 13"><circle cx="6.5" cy="6.5" r="5.9" fill="#f4f4f4" stroke="#7890b0" stroke-width="0.9"/><circle cx="6.8" cy="3.5" r="1.3" fill="#1a1a1a"/><path d="M4.8 5.4H7.9V9.5H8.8V10.8H4.6V9.5H5.5V6.7H4.8Z" fill="#1a1a1a"/></svg><div class="a" style="left:306px;top:89px;width:142px;height:16px;background:#3f3f46;"></div><div class="t" style="left:325.2px;top:93.90px;font-size:9.79px;color:#f1f1f1;font-weight:normal;font-family:'Liberation Sans',sans-serif;transform:scaleX(0.9091);transform-origin:0 0;">Activity</div><div class="a" style="left:306px;top:105px;width:142px;height:460px;background:#252526;"></div><div class="a" style="left:305px;top:565px;width:51px;height:16px;background:#252526;border:1px solid #3f3f46;border-top:none"></div><div class="t" style="left:309.6px;top:569.30px;font-size:9.13px;color:#1a9be6;font-weight:normal;font-family:'Liberation Sans',sans-serif;transform:scaleX(0.9091);transform-origin:0 0;">Views Tree</div><div class="t" style="left:360px;top:569.30px;font-size:9.46px;color:#f1f1f1;font-weight:normal;font-family:'Liberation Sans',sans-serif;transform:scaleX(0.9091);transform-origin:0 0;">Files</div><div class="t" style="left:386px;top:569.30px;font-size:9.46px;color:#f1f1f1;font-weight:normal;font-family:'Liberation Sans',sans-serif;transform:scaleX(0.9091);transform-origin:0 0;">Variants</div><div class="a" style="left:281px;top:586px;width:751px;height:17px;background:#007acc;"></div><div class="t" style="left:289.6px;top:591.20px;font-size:9.35px;color:#ffffff;font-weight:normal;font-family:'Liberation Sans',sans-serif;transform:scaleX(0.9091);transform-origin:0 0;">WYSIWYG status: Disconnected</div><div class="a" style="left:454px;top:49px;width:274px;height:532px;background:#2d2d30;border:1px solid #3f3f46"></div><div class="t" style="left:457.6px;top:52.80px;font-size:9.41px;color:#f1f1f1;font-weight:normal;font-family:'Liberation Sans',sans-serif;transform:scaleX(0.9091);transform-origin:0 0;">Properties</div><svg style="left:503.5px;top:56px" width="195" height="5"><defs><pattern id="gp503" width="3" height="5" patternUnits="userSpaceOnUse"><rect x="0.4" y="0" width="1.3" height="1.2" fill="#747478"/><rect x="1.9" y="0" width="1.1" height="1.2" fill="#1c1c1e"/><rect x="0.4" y="1.6" width="1.2" height="1.4" fill="#1c1c1e"/><rect x="1.9" y="1.6" width="1.2" height="1.4" fill="#6a6a6e"/><rect x="0.4" y="3.2" width="1.3" height="1.3" fill="#747478"/><rect x="1.9" y="3.2" width="1.1" height="1.3" fill="#1c1c1e"/></pattern></defs><rect width="195" height="5" fill="url(#gp503)"/></svg><svg style="left:704.5px;top:57.5px" width="6" height="3.5"><path d="M0 0H6L3.0 3.5Z" fill="#d0d0d0"/></svg><svg style="left:716.5px;top:54px" width="6" height="9" viewBox="0 0 6 9"><path d="M1.5 0.5H4.5V5H1.5Z" fill="none" stroke="#d0d0d0" stroke-width="1"/><path d="M0 5.5H6M3 5.5V9" stroke="#d0d0d0" stroke-width="1"/></svg><div class="a" style="left:455px;top:66px;width:272px;height:23px;background:#252526;"></div><div class="a" style="left:457.5px;top:70px;width:266px;height:16px;background:#1b1b1c;border:1px solid #c8c8c8"></div><div class="a" style="left:707px;top:71px;width:15.5px;height:14px;background:#ffffff;"></div><svg style="left:709.5px;top:72.5px" width="10" height="10" viewBox="0 0 10 10"><circle cx="6" cy="4" r="2.8" fill="none" stroke="#1e64b4" stroke-width="1.2"/><path d="M4 6L1 9" stroke="#1e64b4" stroke-width="1.5"/></svg><div class="t" style="left:461px;top:73.50px;font-size:9.57px;color:#8a8a8a;font-weight:normal;font-family:'Liberation Sans',sans-serif;transform:scaleX(0.9091);transform-origin:0 0;font-style:italic">Filter</div><div class="a" style="left:455px;top:89px;width:259px;height:432px;background:#252526;"></div><div class="a" style="left:455px;top:90px;width:259px;height:132px;background:#2d2d30;"></div><svg style="left:458px;top:95px" width="5.5" height="5.5"><path d="M5.5 0V5.5H0Z" fill="#e8e8e8"/></svg><div class="t" style="left:470.7px;top:94.60px;font-size:9.74px;color:#f1f1f1;font-weight:bold;font-family:'Liberation Sans',sans-serif;transform:scaleX(0.9091);transform-origin:0 0;">Activity Properties</div><div class="a" style="left:467px;top:107px;width:117px;height:15px;background:#3f3f46;"></div><div class="a" style="left:585px;top:107px;width:128px;height:15px;background:#252526;"></div><div class="t" style="left:470.7px;top:111.00px;font-size:9.79px;color:#f1f1f1;font-weight:normal;font-family:'Liberation Sans',sans-serif;transform:scaleX(0.9091);transform-origin:0 0;">Drawable</div><div class="t" style="left:587px;top:111.00px;font-size:9.79px;color:#f1f1f1;font-weight:normal;font-family:'Liberation Sans',sans-serif;transform:scaleX(0.9091);transform-origin:0 0;">ColorDrawable</div><svg style="left:704.5px;top:113px" width="5" height="3"><path d="M0 0H5L2.5 3Z" fill="#c0c0c0"/></svg><div class="a" style="left:477px;top:123px;width:107px;height:16px;background:#252526;"></div><div class="a" style="left:585px;top:123px;width:128px;height:16px;background:#252526;"></div><div class="t" style="left:481px;top:127.42px;font-size:9.79px;color:#f1f1f1;font-weight:normal;font-family:'Liberation Sans',sans-serif;transform:scaleX(0.9091);transform-origin:0 0;">Color</div><svg style="left:587px;top:125px" width="11" height="11" viewBox="0 0 11 11"><rect x="0" y="0" width="11" height="11" fill="#e6e6e6"/><rect x="0" y="0" width="5.5" height="5.5" fill="#bdbdbd"/><rect x="5.5" y="5.5" width="5.5" height="5.5" fill="#bdbdbd"/><path d="M0.5 10.5L10.5 0.5" stroke="#e83030" stroke-width="1.2"/></svg><div class="t" style="left:601.5px;top:127.42px;font-size:9.79px;color:#8a8a8a;font-weight:normal;font-family:'Liberation Sans',sans-serif;transform:scaleX(0.9091);transform-origin:0 0;">Default</div><svg style="left:704.5px;top:129px" width="5" height="3"><path d="M0 0H5L2.5 3Z" fill="#c0c0c0"/></svg><div class="a" style="left:477px;top:140px;width:107px;height:15px;background:#252526;"></div><div class="a" style="left:585px;top:140px;width:128px;height:15px;background:#252526;"></div><div class="t" style="left:481px;top:143.84px;font-size:9.79px;color:#f1f1f1;font-weight:normal;font-family:'Liberation Sans',sans-serif;transform:scaleX(0.9091);transform-origin:0 0;">Alpha Level</div><div class="t" style="left:587px;top:143.84px;font-size:9.79px;color:#f1f1f1;font-weight:normal;font-family:'Liberation Sans',sans-serif;transform:scaleX(0.9091);transform-origin:0 0;">255</div><div class="a" style="left:467px;top:156px;width:117px;height:16px;background:#252526;"></div><div class="a" style="left:585px;top:156px;width:128px;height:16px;background:#252526;"></div><div class="t" style="left:470.7px;top:160.26px;font-size:9.79px;color:#f1f1f1;font-weight:normal;font-family:'Liberation Sans',sans-serif;transform:scaleX(0.9091);transform-origin:0 0;">Title</div><div class="t" style="left:587px;top:160.26px;font-size:9.79px;color:#f1f1f1;font-weight:normal;font-family:'Liberation Sans',sans-serif;transform:scaleX(0.9091);transform-origin:0 0;">Activity</div><div class="a" style="left:467px;top:173px;width:117px;height:15px;background:#252526;"></div><div class="a" style="left:585px;top:173px;width:128px;height:15px;background:#252526;"></div><div class="t" style="left:470.7px;top:176.68px;font-size:9.79px;color:#f1f1f1;font-weight:normal;font-family:'Liberation Sans',sans-serif;transform:scaleX(0.9091);transform-origin:0 0;">Animation Duration (ms)</div><div class="t" style="left:587px;top:176.68px;font-size:9.79px;color:#f1f1f1;font-weight:normal;font-family:'Liberation Sans',sans-serif;transform:scaleX(0.9091);transform-origin:0 0;">400</div><svg style="left:704.5px;top:179px" width="5" height="3"><path d="M0 0H5L2.5 3Z" fill="#c0c0c0"/></svg><div class="a" style="left:467px;top:189px;width:117px;height:16px;background:#252526;"></div><div class="a" style="left:585px;top:189px;width:128px;height:16px;background:#252526;"></div><div class="t" style="left:470.7px;top:193.10px;font-size:9.79px;color:#f1f1f1;font-weight:normal;font-family:'Liberation Sans',sans-serif;transform:scaleX(0.9091);transform-origin:0 0;">Show Title</div><div class="a" style="left:588px;top:192px;width:11px;height:11px;background:#252526;border:1px solid #7a7a7e"></div><svg style="left:589px;top:193px" width="9" height="9" viewBox="0 0 9 9"><path d="M1.5 4.8L3.5 7.3L7.6 1.2" stroke="#f4f4f4" stroke-width="1.4" fill="none"/></svg><div class="a" style="left:467px;top:206px;width:117px;height:15px;background:#252526;"></div><div class="a" style="left:585px;top:206px;width:128px;height:15px;background:#252526;"></div><div class="t" style="left:470.7px;top:209.52px;font-size:9.79px;color:#f1f1f1;font-weight:normal;font-family:'Liberation Sans',sans-serif;transform:scaleX(0.9091);transform-origin:0 0;">Full Screen</div><div class="a" style="left:588px;top:209px;width:11px;height:11px;background:#252526;border:1px solid #5a5a5e"></div><svg style="left:458px;top:112px" width="5.5" height="5.5"><path d="M5.5 0V5.5H0Z" fill="#e8e8e8"/></svg><div class="a" style="left:714.5px;top:90px;width:10.5px;height:431px;background:#2d2d30;"></div><div class="a" style="left:714.5px;top:90px;width:10.5px;height:11.5px;background:#333337;"></div><svg style="left:717px;top:94px" width="6" height="3.5"><path d="M0 3.5H6L3 0Z" fill="#555559"/></svg><div class="a" style="left:714.5px;top:509.5px;width:10.5px;height:11px;background:#333337;"></div><svg style="left:717px;top:513.5px" width="6" height="3.5"><path d="M0 0H6L3 3.5Z" fill="#555559"/></svg><div class="a" style="left:455px;top:521px;width:272px;height:59px;background:#2d2d30;"></div><div class="t" style="left:460px;top:529.30px;font-size:9.79px;color:#f1f1f1;font-weight:bold;font-family:'Liberation Sans',sans-serif;transform:scaleX(0.9091);transform-origin:0 0;">Drawable</div><div class="a" style="left:732px;top:49px;width:79px;height:15px;background:#3e3e42;"></div><div class="t" style="left:737px;top:53.00px;font-size:9.57px;color:#f1f1f1;font-weight:normal;font-family:'Liberation Sans',sans-serif;transform:scaleX(0.9091);transform-origin:0 0;">Abstract Designer</div><svg style="left:1017px;top:56.5px" width="6.5" height="3.5"><path d="M0 0H6.5L3.25 3.5Z" fill="#d0d0d0"/></svg><div class="a" style="left:733px;top:64px;width:293px;height:517px;background:#2d2d30;border:1px solid #3f3f46"></div><div class="a" style="left:734px;top:67px;width:291px;height:16px;background:#333337;border-bottom:1px solid #505054"></div><div class="t" style="left:736.2px;top:71.00px;font-size:9.68px;color:#f1f1f1;font-weight:normal;font-family:'Liberation Sans',sans-serif;transform:scaleX(0.9091);transform-origin:0 0;">Match Chosen Variant</div><svg style="left:1018.3px;top:72.7px" width="5" height="2.6"><path d="M0 0H5L2.5 2.6Z" fill="#c8c8c8"/></svg><div class="a" style="left:734px;top:83px;width:291px;height:497px;background:#2d2d30;border-left:1px solid #3f3f46"></div><div class="a" style="left:753px;top:163px;width:260px;height:405px;background:#cbcbcb;border-top:1px solid #1e1e1e;border-right:1px solid #1e1e1e;border-bottom:1px solid #222"></div><div class="a" style="left:753px;top:164px;width:240px;height:322px;background:linear-gradient(135deg,#a9a9a9 0%,#9b9b9b 50%,#8e8e8e 100%);"></div><svg style="left:738px;top:88px" width="40" height="40" viewBox="0 0 40 40"><circle cx="19.6" cy="19.3" r="18.4" fill="#252526" stroke="#48484c" stroke-width="1"/><path d="M16.5 10.2L19.7 7L22.9 10.2 M16.5 28.4L19.7 31.6L22.9 28.4 M10.3 15.8L6.9 19.3L10.3 22.8 M29.1 15.8L32.5 19.3L29.1 22.8" stroke="#f8f8f8" stroke-width="1.9" fill="none"/></svg><svg style="left:779px;top:98px" width="20" height="20" viewBox="0 0 20 20"><circle cx="10" cy="10" r="8.6" fill="#252526" stroke="#48484c" stroke-width="1"/><path d="M9.2 6.4L6 10.3L9.2 14.2 M13.6 6.4L10.4 10.3L13.6 14.2" stroke="#f8f8f8" stroke-width="1.7" fill="none"/></svg><div class="a" style="left:746px;top:130px;width:23px;height:174px;background:#252526;border:1px solid #3a3a3e;border-radius:11px"></div><div class="a" style="left:756.8px;top:138px;width:2px;height:106px;background:#5a5a5e;"></div><div class="a" style="left:749px;top:168px;width:17px;height:8.5px;background:#9a9a9a;border-radius:1px"></div><div class="t" style="left:749.6px;top:249.70px;font-size:7.04px;color:#f0f0f0;font-weight:normal;font-family:'Liberation Sans',sans-serif;transform:scaleX(0.9091);transform-origin:0 0;">100%</div><div class="a" style="left:747px;top:257px;width:21px;height:1px;background:#3a3a3e;"></div><svg style="left:751px;top:263px" width="14" height="14" viewBox="0 0 14 14"><rect x="0.7" y="0.7" width="12.6" height="12.6" fill="none" stroke="#f4f4f4" stroke-width="1.4"/><path d="M7 2.5V11.5M2.5 7H11.5 M5.5 4L7 2.5L8.5 4 M5.5 10L7 11.5L8.5 10 M4 5.5L2.5 7L4 8.5 M10 5.5L11.5 7L10 8.5" stroke="#f4f4f4" stroke-width="1" fill="none"/></svg><svg style="left:751px;top:283px" width="14" height="12" viewBox="0 0 14 12"><path d="M4 3.5H0.7V11.3H13.3V3.5H10" stroke="#f4f4f4" stroke-width="1.4" fill="none"/><path d="M7 0V8M4.5 5.5L7 8L9.5 5.5" stroke="#f4f4f4" stroke-width="1.3" fill="none"/></svg><div class="a" style="left:1013px;top:84px;width:11px;height:483px;background:#2d2d30;"></div><div class="a" style="left:1013px;top:84px;width:11px;height:11px;background:#333337;"></div><svg style="left:1015.5px;top:87.5px" width="6" height="3.5"><path d="M0 3.5H6L3 0Z" fill="#9a9a9a"/></svg><div class="a" style="left:1013px;top:133px;width:11px;height:109px;background:#3e3e42;"></div><div class="a" style="left:1016px;top:184.5px;width:5px;height:1px;background:#8a8a8a;"></div><div class="a" style="left:1016px;top:186.5px;width:5px;height:1px;background:#8a8a8a;"></div><div class="a" style="left:1016px;top:188.5px;width:5px;height:1px;background:#8a8a8a;"></div><div class="a" style="left:1013px;top:555px;width:11px;height:12px;background:#333337;"></div><svg style="left:1015.5px;top:559.5px" width="6" height="3.5"><path d="M0 0H6L3 3.5Z" fill="#9a9a9a"/></svg><div class="a" style="left:734px;top:568px;width:279px;height:11px;background:#2d2d30;"></div><div class="a" style="left:734.5px;top:568px;width:10.5px;height:11px;background:#333337;"></div><svg style="left:738px;top:570.5px" width="3.5" height="6"><path d="M3.5 0V6L0 3Z" fill="#9a9a9a"/></svg><div class="a" style="left:762px;top:568px;width:40px;height:11px;background:#3e3e42;"></div><div class="a" style="left:780px;top:571px;width:1px;height:5px;background:#8a8a8a;"></div><div class="a" style="left:782px;top:571px;width:1px;height:5px;background:#8a8a8a;"></div><div class="a" style="left:784px;top:571px;width:1px;height:5px;background:#8a8a8a;"></div><div class="a" style="left:1000px;top:568px;width:12px;height:11px;background:#333337;"></div><svg style="left:1004.5px;top:570.5px" width="3.5" height="6"><path d="M0 0V6L3.5 3Z" fill="#9a9a9a"/></svg><div class="a" style="left:1013px;top:567px;width:11px;height:12px;background:#2d2d30;"></div><div class="a" style="left:466px;top:301px;width:227px;height:112px;background:rgba(0,0,0,0.35);border-radius:6px;filter:blur(1px)"></div><div class="a" style="left:467px;top:302px;width:225px;height:110px;background:linear-gradient(180deg,#f0e6e0 0%,#e8e4e2 45%,#dedede 100%);border:1px solid #8c8c8c;border-radius:5px"></div><svg style="left:672px;top:307px" width="14" height="14" viewBox="0 0 14 14"><path d="M2.2 2.2L11.8 11.8M11.8 2.2L2.2 11.8" stroke="#fafafa" stroke-width="4.2"/><path d="M2.2 2.2L11.8 11.8M11.8 2.2L2.2 11.8" stroke="#707070" stroke-width="2.8"/></svg><svg style="left:478px;top:344px" width="25" height="25" viewBox="0 0 25 25"><defs><radialGradient id="rg" cx="40%" cy="35%" r="70%"><stop offset="0" stop-color="#f05a5a"/><stop offset="0.6" stop-color="#c01818"/><stop offset="1" stop-color="#8a0a0a"/></radialGradient></defs><circle cx="12.6" cy="12.5" r="11" fill="#e0e0e0" stroke="#9a9a9a" stroke-width="0.9"/><circle cx="12.6" cy="12.5" r="9.8" fill="url(#rg)"/><path d="M8.3 8.2L16.9 16.8M16.9 8.2L8.3 16.8" stroke="#e8e8e8" stroke-width="2.8"/></svg><div class="t" style="left:513.4px;top:321.20px;font-size:10.95px;color:#151515;font-weight:normal;font-family:'Liberation Sans',sans-serif;transform:scaleX(0.9091);transform-origin:0 0;-webkit-text-stroke:0.1px #151515">An error occurred.</div><div class="t" style="left:513.4px;top:333.83px;font-size:10.95px;color:#151515;font-weight:normal;font-family:'Liberation Sans',sans-serif;transform:scaleX(0.9091);transform-origin:0 0;-webkit-text-stroke:0.1px #151515">Error loading file.</div><div class="t" style="left:513.4px;top:346.46px;font-size:10.95px;color:#151515;font-weight:normal;font-family:'Liberation Sans',sans-serif;transform:scaleX(0.9091);transform-origin:0 0;-webkit-text-stroke:0.1px #151515">Não foi possível localizar o arquivo &#x27;C:</div><div class="t" style="left:513.4px;top:359.09px;font-size:10.95px;color:#151515;font-weight:normal;font-family:'Liberation Sans',sans-serif;transform:scaleX(0.9091);transform-origin:0 0;-webkit-text-stroke:0.1px #151515">\Users\Fernando\OneDrive\Pesquisas-</div><div class="t" style="left:513.4px;top:371.72px;font-size:10.95px;color:#151515;font-weight:normal;font-family:'Liberation Sans',sans-serif;transform:scaleX(0.9091);transform-origin:0 0;-webkit-text-stroke:0.1px #151515">Estudos\Basic4Android\Files</div><div class="t" style="left:513.4px;top:384.35px;font-size:10.95px;color:#151515;font-weight:normal;font-family:'Liberation Sans',sans-serif;transform:scaleX(0.9091);transform-origin:0 0;-webkit-text-stroke:0.1px #151515">\UberCalcB4A.bal&#x27;.</div></body></html>
